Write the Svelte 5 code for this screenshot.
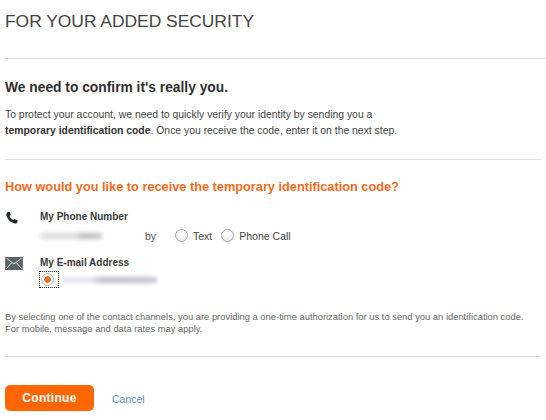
<script>
    let channel = $state("email");
</script>

<main class="page">
    <h1>FOR YOUR ADDED SECURITY</h1>
    <hr class="top-rule" />

    <h2>We need to confirm it's really you.</h2>
    <p class="intro">
        To protect your account, we need to quickly verify your identity by sending you a<br />
        <b>temporary identification code</b>. Once you receive the code, enter it on the next step.
    </p>
    <hr class="mid-rule" />

    <h3>How would you like to receive the temporary identification code?</h3>

    <div class="contact phone">
        <svg class="icon" width="14" height="14" viewBox="0 0 16 16" aria-hidden="true">
            <path d="M3.4 1 L5.4 1.2 L6.6 4.6 L5.2 5.8 C5.8 7.6 7.2 9.2 9.2 10.2 L10.8 9 L14.6 10.8 L14 13 C12.8 14.6 11 14.6 9.4 13.8 C5.4 12 2.6 8.6 1.6 5 C1.2 3.4 1.8 2 3.4 1 Z" fill="#22292d" />
        </svg>
        <div class="details">
            <div class="label">My Phone Number</div>
            <div class="row">
                <span class="masked phone-mask"></span>
                <span class="by">by</span>
                <label class="choice"><input type="radio" name="channel" bind:group={channel} value="text" /><span class="dot"></span>Text</label>
                <label class="choice"><input type="radio" name="channel" bind:group={channel} value="call" /><span class="dot"></span>Phone Call</label>
            </div>
        </div>
    </div>

    <div class="contact email">
        <svg class="icon" width="18" height="13" viewBox="0 0 19 14" aria-hidden="true">
            <rect width="19" height="14" fill="#5b6468" />
            <path d="M1.5 1.5 L9.5 7.5 L17.5 1.5 M1.5 12.5 L7 6 M17.5 12.5 L12 6" fill="none" stroke="#e8eaea" stroke-width="1" />
        </svg>
        <div class="details">
            <div class="label">My E-mail Address</div>
            <div class="row email-row">
                <label class="choice focused"><input type="radio" name="channel" bind:group={channel} value="email" /><span class="dot"></span></label>
                <span class="masked email-mask"></span>
            </div>
        </div>
    </div>

    <p class="note">
        By selecting one of the contact channels, you are providing a one-time authorization for us to send you an identification code.<br />
        For mobile, message and data rates may apply.
    </p>
    <hr class="low-rule" />

    <div class="actions">
        <button type="button">Continue</button>
        <a href="#cancel">Cancel</a>
    </div>
</main>

<style>
    :global(body) {
        margin: 0;
        background: #fff;
    }
    .page {
        width: 541px;
        height: 420px;
        padding-left: 5px;
        overflow: hidden;
        font-family: "Liberation Sans", Arial, sans-serif;
        font-size: 10.5px;
        color: #444;
    }
    h1 {
        margin: 0;
        padding-top: 11px;
        font-size: 17.4px;
        line-height: 21px;
        font-weight: 400;
        color: #444;
    }
    hr {
        margin: 0;
        border: 0;
        border-top: 1px solid #ddd;
    }
    .top-rule {
        margin-top: 26px;
    }
    h2 {
        margin: 20px 0 0;
        font-size: 13.8px;
        line-height: 18px;
        color: #2f2f2f;
    }
    .intro {
        margin: 10px 0 0;
        font-size: 10.4px;
        line-height: 16px;
    }
    .intro b {
        color: #333;
    }
    .mid-rule {
        margin: 20px 5px 0 0;
    }
    h3 {
        margin: 19px 0 0;
        font-size: 12.75px;
        line-height: 16px;
        color: #f26a1b;
    }
    .contact {
        display: flex;
    }
    .phone {
        margin-top: 15px;
    }
    .email {
        margin-top: 14px;
    }
    .icon {
        flex: none;
        margin-top: 1px;
    }
    .phone .icon {
        margin-right: 21px;
    }
    .email .icon {
        margin-right: 17px;
    }
    .label {
        font-size: 10px;
        font-weight: 700;
        line-height: 14px;
        color: #3a3a3a;
    }
    .row {
        display: flex;
        align-items: center;
    }
    .phone .row {
        margin-top: 5px;
    }
    .email-row {
        margin: 1px 0 0 -1px;
    }
    .choice {
        display: flex;
        align-items: center;
        gap: 5px;
        margin-right: 9px;
        position: relative;
    }
    input {
        position: absolute;
        opacity: 0;
        margin: 0;
        width: 13px;
        height: 13px;
    }
    .dot {
        display: block;
        box-sizing: border-box;
        width: 13px;
        height: 13px;
        border-radius: 50%;
        border: 1px solid #aaa;
        background: radial-gradient(circle at 50% 35%, #fff, #e6e6e6);
    }
    input:checked + .dot {
        background: radial-gradient(circle, #f26a1b 0 3px, #fff 3.5px);
        border-color: #bbb;
    }
    .focused {
        margin-right: 0;
        padding: 1px 4px 1px 1px;
        border: 1px dotted #222;
    }
    .masked {
        display: block;
        height: 6px;
        border-radius: 3px;
        filter: blur(2px);
    }
    .phone-mask {
        width: 62px;
        margin-right: 43px;
        background: linear-gradient(to right, #dcdcde 55%, #b9b9bd 70%, #c4c4c8 95%);
    }
    .by {
        width: 30px;
        color: #555;
    }
    .email-mask {
        width: 96px;
        margin-left: 2px;
        background: linear-gradient(to right, #e6e4ee 30%, #bdbcc4 45%, #c3c2ca 95%);
    }
    .note {
        margin: 23px 0 0;
        font-size: 9.4px;
        line-height: 12px;
        color: #666;
    }
    .low-rule {
        margin: 21px 5px 0 0;
    }
    .actions {
        display: flex;
        align-items: center;
        margin-top: 28px;
    }
    button {
        width: 89px;
        height: 26px;
        padding: 0;
        border: 0;
        border-radius: 5px;
        background: #ff6600;
        color: #fff;
        font: 700 12px "Liberation Sans", Arial, sans-serif;
        letter-spacing: 0.3px;
    }
    a {
        margin-left: 18px;
        padding-top: 2px;
        color: #5f97c4;
        text-decoration: none;
    }
</style>
